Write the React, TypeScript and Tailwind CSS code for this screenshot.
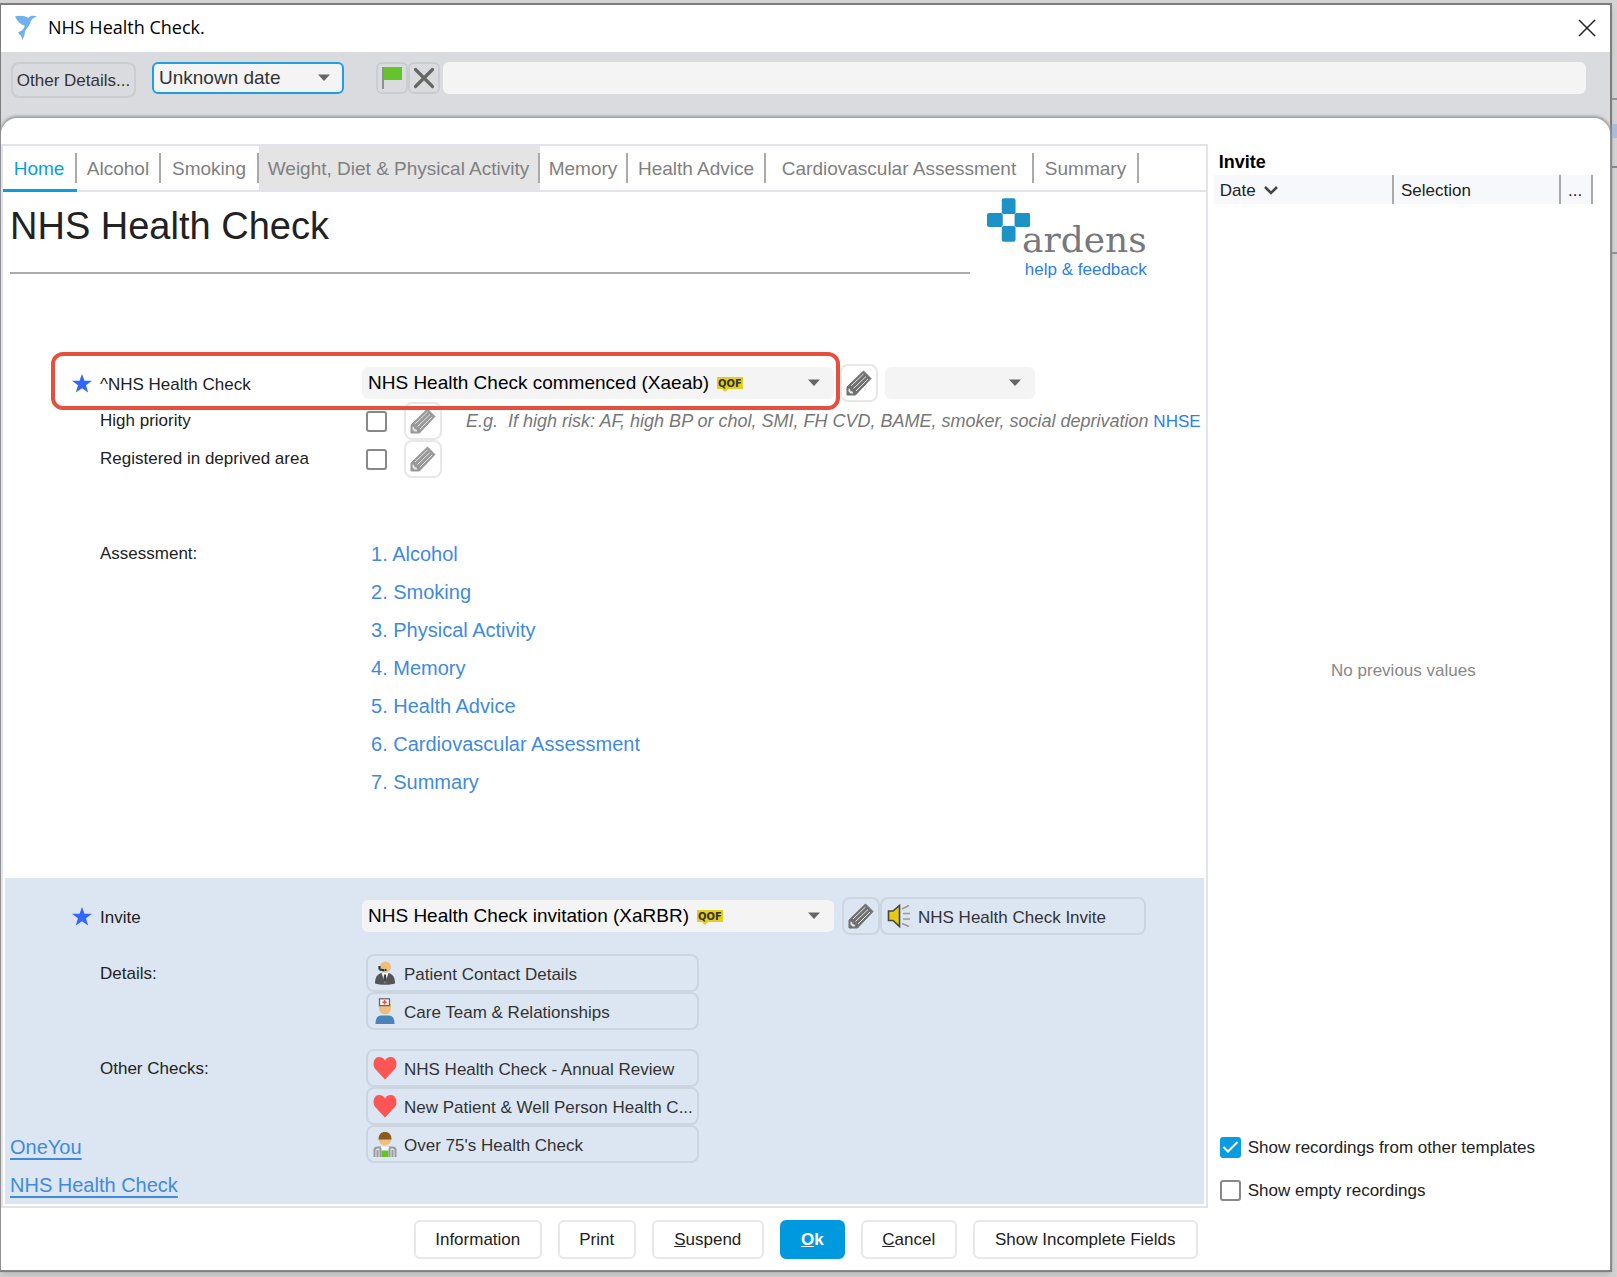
import type { ReactNode } from "react";

const TABS = [
  { label: "Home", width: "w-[74px]" },
  { label: "Alcohol", width: "w-[84px]" },
  { label: "Smoking", width: "w-[98px]" },
  { label: "Weight, Diet & Physical Activity", width: "w-[281px]" },
  { label: "Memory", width: "w-[88px]" },
  { label: "Health Advice", width: "w-[138px]" },
  { label: "Cardiovascular Assessment", width: "w-[268px]" },
  { label: "Summary", width: "w-[105px]" },
];

const SECTIONS = [
  "Alcohol",
  "Smoking",
  "Physical Activity",
  "Memory",
  "Health Advice",
  "Cardiovascular Assessment",
  "Summary",
];

function BirdLogo() {
  return (
    <svg width="22" height="26" viewBox="0 0 22 26" fill="#6fb1ee" aria-hidden="true">
      <path d="M0 1.5C4 .2 10 .6 13.500 3 15 .6 18 .4 22 1.500 18.500 2.500 16 4.500 15 8c-.8 3.500-4 5.500-5 8.500L9.500 20 7.500 25 6 20.500C4 19.500 3 18 3.500 17 8 15.500 9.500 13 9.500 10.500 5 9.500 2 5.500 0 1.500z" />
    </svg>
  );
}

function ArdensCross() {
  return (
    <svg width="44" height="44" viewBox="0 0 44 44" fill="#1d92c6" aria-hidden="true">
      <rect x="15" y="0" width="14" height="16" rx="2" />
      <rect x="0" y="15" width="16" height="14" rx="2" />
      <rect x="28" y="15" width="16" height="14" rx="2" />
      <rect x="15" y="28" width="14" height="16" rx="2" />
    </svg>
  );
}

function Star() {
  return (
    <svg width="20" height="19" viewBox="0 0 20 19" fill="#3366ff" aria-hidden="true">
      <path d="M10 0l2.500 6.800H20l-6 4.500 2.200 7.200L10 14.200l-6.200 4.300L6 11.300 0 6.800h7.500z" />
    </svg>
  );
}

function Pencil({ color }: { color: string }) {
  return (
    <svg width="26" height="26" viewBox="0 0 26 26" aria-hidden="true">
      <path d="M1 25v-8L17.500 1 25 8.500 9.500 25z" fill={color} stroke={color} strokeLinejoin="round" />
      <path d="M5 16L17.500 4M7.500 18.500L20 6.500M10 21L22 9" stroke="#e6e6e6" strokeWidth="1" />
      <path d="M2.500 18.500l1.500.5.500 2 2 .5.800 2H4.500l-2-2z" fill="#e6e6e6" />
    </svg>
  );
}

function Heart() {
  return (
    <svg width="24" height="24" viewBox="0 0 24 24" fill="#ff5555" aria-hidden="true">
      <path d="M12 23.500L2.200 13C-.8 9.500.2 1 6.200 1 9 1 11 2.500 12 4.500 13 2.500 15 1 17.800 1c6 0 7 8.500 4 12z" />
    </svg>
  );
}

function Operator() {
  return (
    <svg width="24" height="24" viewBox="0 0 24 24" aria-hidden="true">
      <circle cx="12.500" cy="6" r="5.500" fill="#ecc07c" />
      <path d="M6.500 5v3.500M6.500 8.500l5 .8M12 9h1.500" stroke="#333" strokeWidth="2.200" fill="none" />
      <path d="M2 22.500c0-6 2-9 6-10.500h8c4 1.500 6 4.500 6 10.500-5 1.800-15 1.800-20 0z" fill="#555" />
      <path d="M8.500 12L12 22.500 15.500 12z" fill="#fff" />
      <path d="M11 13.500h2l.6 5L12 22l-1.600-3.500z" fill="#444" />
    </svg>
  );
}

function Nurse() {
  return (
    <svg width="24" height="26" viewBox="0 0 24 26" aria-hidden="true">
      <path d="M6 6h12v4.500a6 6 0 0 1-12 0z" fill="#ecc07c" />
      <rect x="6.500" y=".8" width="10" height="6.800" fill="#fff" stroke="#666" strokeWidth="1.300" />
      <path d="M11.500 2v4.500M9.300 4.200h4.400" stroke="#f44" strokeWidth="1.500" />
      <path d="M2.500 26c0-6 2-8.500 6-8.500h7c4 0 6 2.500 6 8.500z" fill="#4a84bb" />
    </svg>
  );
}

function Elder() {
  return (
    <svg width="24" height="25" viewBox="0 0 24 25" aria-hidden="true">
      <path d="M5.500 7h13a6.500 6.500 0 0 1-13 0z" fill="#ecc07c" />
      <path d="M5.500 7.500C5.500 2.500 8 0 12 0s6.500 2.500 6.500 7.500z" fill="#8a5a1f" />
      <path d="M8 15h8v10H8z" fill="#fff" />
      <path d="M8.500 18.500h7V25h-7z" fill="#62c22a" />
      <path d="M1.500 25v-7c0-1.500 1-2.500 3-2.500H8M4.500 25v-7M7.500 25v-9M22.500 25v-7c0-1.500-1-2.500-3-2.500H16M19.500 25v-7M16.500 25v-9" stroke="#9a9a9a" strokeWidth="2" fill="none" />
    </svg>
  );
}

function Speaker() {
  return (
    <svg width="24" height="24" viewBox="0 0 24 24" aria-hidden="true">
      <path d="M1.500 7H6l6.500-5.500v21L6 16.500H1.500z" fill="#e3cb17" stroke="#444" strokeWidth="1.600" />
      <path d="M15 5l7-3.500M16 9.500h7M16 15h7M15 19.500l7 3" stroke="#999" strokeWidth="1.500" />
    </svg>
  );
}

function Caret() {
  return (
    <svg className="pointer-events-none absolute top-3 right-[14px]" width="12" height="8" viewBox="0 0 12 8" aria-hidden="true">
      <path d="M0 .5h12L6 7z" fill="#666" />
    </svg>
  );
}

/* Drop-down with the yellow QOF marker after its value */
function CodeSelect({ id, value }: { id: string; value: string }) {
  return (
    <div className="relative h-8 w-[472px] shrink-0">
      <select id={id} className="h-full w-full appearance-none rounded-md bg-[#f4f4f4] pl-[6px] text-[19px] text-black">
        <option>{value}</option>
      </select>
      <div className="pointer-events-none absolute inset-y-0 left-[6px] flex items-center text-[19px]" aria-hidden="true">
        <span className="invisible whitespace-pre">{value}</span>
        <span className="relative ml-2 flex h-3 items-center bg-[#e3cf1d] px-px font-['DejaVu_Sans'] text-[10px] font-bold text-[#333]">
          QOF
          <svg className="absolute top-3 left-[5px]" width="6" height="3" viewBox="0 0 6 3" fill="#e3cf1d">
            <path d="M0 0h6L3 3z" />
          </svg>
        </span>
      </div>
      <Caret />
    </div>
  );
}

function PencilButton({ label, color = "#707070", tint = false }: { label: string; color?: string; tint?: boolean }) {
  return (
    <button
      type="button"
      aria-label={label}
      className={`flex size-[38px] shrink-0 items-center justify-center rounded-lg border-2 ${
        tint ? "border-[#cbd5e0] bg-[#dce6f2]" : "border-[#e8e8e8] bg-white"
      }`}
    >
      <Pencil color={color} />
    </button>
  );
}

function IconButton({ icon, width, children }: { icon: ReactNode; width: string; children: ReactNode }) {
  return (
    <button
      type="button"
      className={`flex h-[38px] items-center gap-[7px] rounded-lg border-2 border-[#cbd5e0] pl-[5px] text-[17px] whitespace-nowrap text-[#333] ${width}`}
    >
      {icon}
      <span className="pt-1">{children}</span>
    </button>
  );
}

function FooterButton({ width, primary = false, children }: { width: string; primary?: boolean; children: ReactNode }) {
  return (
    <button
      type="button"
      className={`h-[39px] rounded-md border-2 pt-[2px] text-[17px] whitespace-nowrap ${width} ${
        primary ? "border-[#0099e0] bg-[#0099e0] font-bold text-white" : "border-[#e8e8e8] bg-white text-[#222]"
      }`}
    >
      {children}
    </button>
  );
}

const BOX = "size-[21px] shrink-0 appearance-none rounded-[3px] border-2 border-[#888] bg-white";

function TitleBar() {
  return (
    <header className="flex h-[47px] items-center bg-white pr-[14px] pb-[2px] pl-[14px]">
      <BirdLogo />
      <span className="ml-[11px] font-['Open_Sans',sans-serif] text-[18px] text-black">NHS Health Check.</span>
      <button type="button" aria-label="Close" className="ml-auto">
        <svg width="18" height="18" viewBox="0 0 18 18" stroke="#222" strokeWidth="1.500" aria-hidden="true">
          <path d="M1 1l16 16M17 1L1 17" />
        </svg>
      </button>
    </header>
  );
}

function Toolbar() {
  return (
    <div className="flex h-[66px] items-start bg-[#dadbdf] pt-[10px] pr-6 pl-[10px]">
      <button type="button" className="h-9 w-[125px] rounded-lg border-2 border-[#cbccd0] pt-[2px] text-[17px] whitespace-nowrap text-[#333]">
        Other Details...
      </button>
      <div className="relative ml-4 h-8 w-48">
        <select
          aria-label="Date"
          className="h-full w-full appearance-none rounded-md border-2 border-[#1ca0e3] bg-[#f4f4f4] pl-[5px] text-[19px] text-[#333]"
        >
          <option>Unknown date</option>
        </select>
        <Caret />
      </div>
      <button type="button" aria-label="Flag" className="ml-8 flex size-8 items-center justify-center rounded-md border-2 border-[#cbccd0]">
        <svg width="20" height="24" viewBox="0 0 20 24" aria-hidden="true">
          <path d="M1 1v22" stroke="#777" strokeWidth="1.500" />
          <path d="M2 1h18v13H2z" fill="#65c32b" />
        </svg>
      </button>
      <button type="button" aria-label="Clear" className="flex size-8 items-center justify-center rounded-md border-2 border-[#cbccd0]">
        <svg width="22" height="22" viewBox="0 0 22 22" stroke="#666" strokeWidth="3.200" strokeLinecap="round" aria-hidden="true">
          <path d="M2.500 2.500l17 17M19.500 2.500l-17 17" />
        </svg>
      </button>
      <input type="text" aria-label="Notes" className="ml-[3px] h-8 min-w-0 flex-1 rounded-md bg-[#f4f4f4] px-2 text-[17px]" />
    </div>
  );
}

function Tabs() {
  return (
    <nav className="flex h-[46px] border-b-2 border-[#e3e3ea]" role="tablist">
      {TABS.map((tab, i) => (
        <button
          key={tab.label}
          type="button"
          role="tab"
          aria-selected={i === 0}
          className={`-mb-[2px] flex shrink-0 items-center text-[19px] whitespace-nowrap ${tab.width} ${
            i === 0 ? "border-b-[3px] border-[#0a9ce0] pt-px text-[#0a9ce0]" : "border-b-2 border-[#e3e3ea] text-[#808080]"
          } ${i === 3 ? "bg-[#e4e4e4]" : ""}`}
        >
          <span className="flex h-[30px] w-full items-center justify-center border-r-2 border-[#aaa] pt-[2px]">{tab.label}</span>
        </button>
      ))}
    </nav>
  );
}

function Heading() {
  return (
    <div className="flex h-[172px] items-start pl-[7px]">
      <h1 className="mt-1 h-[78px] min-w-0 flex-1 border-b-2 border-[#aaa] pt-[7px] text-[38px] leading-[46px] text-[#222]">
        NHS Health Check
      </h1>
      <div className="mr-[59px] ml-[17px] flex w-[160px] flex-col">
        <div className="flex pt-[6px]">
          <ArdensCross />
          <span className="-ml-2 pt-[22px] font-['DejaVu_Serif',serif] text-[36px] leading-[40px] text-[#77787c]">ardens</span>
        </div>
        <a href="#help" className="self-end text-[17px] leading-5 whitespace-nowrap text-[#2a80ea]">
          help &amp; feedback
        </a>
      </div>
    </div>
  );
}

function HealthCheckForm() {
  return (
    <div>
      <div className="relative flex h-[38px] items-center">
        <span className="flex w-[97px] justify-end pr-2">
          <Star />
        </span>
        <label htmlFor="nhs-check" className="w-[262px] pt-1 text-[17px]">
          ^NHS Health Check
        </label>
        <CodeSelect id="nhs-check" value="NHS Health Check commenced (Xaeab)" />
        <div className="ml-[6px]">
          <PencilButton label="Edit NHS Health Check" />
        </div>
        <div className="relative ml-[7px] h-8 w-[150px]">
          <select aria-label="NHS Health Check value" className="h-full w-full appearance-none rounded-md bg-[#f4f4f4]" />
          <Caret />
        </div>
        {/* Call-out round the main code */}
        <div className="pointer-events-none absolute -top-3 left-12 z-10 h-[58px] w-[789px] rounded-xl border-4 border-[#e64e3d]" />
      </div>
      <div className="flex h-[38px] items-center pl-[97px]">
        <label htmlFor="priority" className="w-[266px] text-[17px]">
          High priority
        </label>
        <input id="priority" type="checkbox" className={BOX} />
        <div className="ml-[17px]">
          <PencilButton label="Edit priority" color="#999999" />
        </div>
        <p className="ml-6 text-[17px] whitespace-pre text-[#2a80ea]">
          <span className="text-[18px] text-[#777] italic">
            E.g.{"  "}If high risk: AF, high BP or chol, SMI, FH CVD, BAME, smoker, social deprivation
          </span>{" "}
          <a href="#nhse">NHSE</a>
        </p>
      </div>
      <div className="flex h-[38px] items-center pl-[97px]">
        <label htmlFor="deprived" className="w-[266px] text-[17px]">
          Registered in deprived area
        </label>
        <input id="deprived" type="checkbox" className={BOX} />
        <div className="ml-[17px]">
          <PencilButton label="Edit deprived area" color="#999999" />
        </div>
      </div>
      <div className="mt-[57px] flex pl-[97px]">
        <p className="w-[271px] text-[17px] leading-[38px]">Assessment:</p>
        <ol>
          {SECTIONS.map((name, i) => (
            <li key={name} className="text-[20px] leading-[38px] text-[#3f8ae0]">
              <a href="#section">
                {i + 1}. {name}
              </a>
            </li>
          ))}
        </ol>
      </div>
    </div>
  );
}

function InvitePanel() {
  return (
    <div className="mx-[2px] mt-auto mb-[2px] bg-[#dce6f2] pt-[19px]">
      <div className="flex h-[38px] items-center">
        <span className="flex w-[95px] justify-end pr-2">
          <Star />
        </span>
        <label htmlFor="invite" className="w-[262px] pt-1 text-[17px]">
          Invite
        </label>
        <CodeSelect id="invite" value="NHS Health Check invitation (XaRBR)" />
        <div className="ml-2">
          <PencilButton label="Edit invite" tint />
        </div>
        <IconButton icon={<Speaker />} width="w-[266px]">
          NHS Health Check Invite
        </IconButton>
      </div>
      <div className="mt-[19px] flex pl-[95px]">
        <p className="w-[266px] pt-px text-[17px] leading-[38px]">Details:</p>
        <div>
          <IconButton icon={<Operator />} width="w-[333px]">
            Patient Contact Details
          </IconButton>
          <IconButton icon={<Nurse />} width="w-[333px]">
            Care Team &amp; Relationships
          </IconButton>
        </div>
      </div>
      <div className="mt-[19px] flex">
        <div className="w-[361px] pt-px pl-[5px] text-[20px] leading-[38px] text-[#3f8ae0]">
          <p className="mb-10 pl-[90px] text-[17px] leading-[38px] text-[#222]">Other Checks:</p>
          <p>
            <a href="#oneyou" className="underline underline-offset-4">
              OneYou
            </a>
          </p>
          <p>
            <a href="#nhs" className="underline underline-offset-4">
              NHS Health Check
            </a>
          </p>
        </div>
        <div>
          <IconButton icon={<Heart />} width="w-[333px]">
            NHS Health Check - Annual Review
          </IconButton>
          <IconButton icon={<Heart />} width="w-[333px]">
            New Patient &amp; Well Person Health C...
          </IconButton>
          <IconButton icon={<Elder />} width="w-[333px]">
            Over 75's Health Check
          </IconButton>
        </div>
      </div>
    </div>
  );
}

function Footer() {
  return (
    <div className="flex h-[62px] items-center justify-end gap-4 pr-[10px]">
      <FooterButton width="w-[128px]">Information</FooterButton>
      <FooterButton width="w-[78px]">Print</FooterButton>
      <FooterButton width="w-[112px]">
        <u>S</u>uspend
      </FooterButton>
      <FooterButton width="w-[65px]" primary>
        <u>O</u>k
      </FooterButton>
      <FooterButton width="w-[96px]">
        <u>C</u>ancel
      </FooterButton>
      <FooterButton width="w-[225px]">Show Incomplete Fields</FooterButton>
    </div>
  );
}

function Recordings() {
  return (
    <aside className="flex w-1/4 shrink-0 flex-col pr-[17px] pb-[69px] pl-[6px] text-[17px]">
      <h2 className="pt-[6px] pl-[5px] text-[18px] leading-[25px] font-bold text-black">Invite</h2>
      <table className="w-full table-fixed bg-[#f7f8fb] text-left">
        <thead>
          <tr className="h-7">
            <th className="border-r-2 border-[#aaa] pt-[3px] pl-[6px] font-normal">
              <span className="flex items-center gap-2">
                Date
                <svg width="14" height="9" viewBox="0 0 14 9" fill="none" stroke="#444" strokeWidth="2.500" aria-hidden="true">
                  <path d="M1 1l6 6 6-6" />
                </svg>
              </span>
            </th>
            <th className="w-[167px] border-r-2 border-[#aaa] pt-[3px] pl-[7px] font-normal">Selection</th>
            <th className="w-8 border-r-2 border-[#aaa] pt-[3px] pl-[7px] font-normal">...</th>
          </tr>
        </thead>
      </table>
      <p className="flex flex-1 items-center justify-center text-[#888]">No previous values</p>
      <div className="flex flex-col gap-[22px] pl-[6px]">
        <label className="flex h-[21px] items-center gap-[7px]">
          <span className="relative flex">
            <input type="checkbox" defaultChecked className={`${BOX} checked:border-[#0a9ce0] checked:bg-[#0a9ce0]`} />
            <svg className="pointer-events-none absolute top-[3px] left-[2px]" width="17" height="14" viewBox="0 0 17 14" fill="none" stroke="#fff" strokeWidth="2" aria-hidden="true">
              <path d="M1.500 7l4.500 4.500L15.500 2" />
            </svg>
          </span>
          Show recordings from other templates
        </label>
        <label className="flex h-[21px] items-center gap-[7px]">
          <input type="checkbox" className={BOX} />
          Show empty recordings
        </label>
      </div>
    </aside>
  );
}

/* Sliver of the application window behind the dialog */
function Backdrop() {
  return (
    <div className="w-[5px] shrink-0 pt-[95px]" aria-hidden="true">
      <div className="h-[26px] border-t-2 border-[#8f9296]" />
      <div className="h-[14px] bg-[#abbcd8]" />
      <div className="mt-7 h-[86px] border-t-2 border-[#7f8794]" />
      <div className="border-t-2 border-[#8f9296]" />
    </div>
  );
}

export default function App() {
  return (
    <div className="flex min-h-screen bg-[#d3d3d3] pt-[3px] pb-[5px] font-['Liberation_Sans',Arial,sans-serif] text-[#222]">
      <div className="flex min-w-0 flex-1 flex-col border-2 border-l-1 border-[#7d7d7d] bg-white shadow-md">
        <TitleBar />
        <Toolbar />
        <div className="flex flex-1 flex-col bg-[#dadbdf]">
          <div className="flex flex-1 rounded-t-2xl bg-white pt-[26px] shadow-[0_-1px_3px_1px_#9a9ba0]">
            <main className="flex min-w-0 flex-1 flex-col">
              <div className="flex flex-1 flex-col border-2 border-[#e3e3ea]">
                <Tabs />
                <Heading />
                <HealthCheckForm />
                <InvitePanel />
              </div>
              <Footer />
            </main>
            <Recordings />
          </div>
        </div>
      </div>
      <Backdrop />
    </div>
  );
}
